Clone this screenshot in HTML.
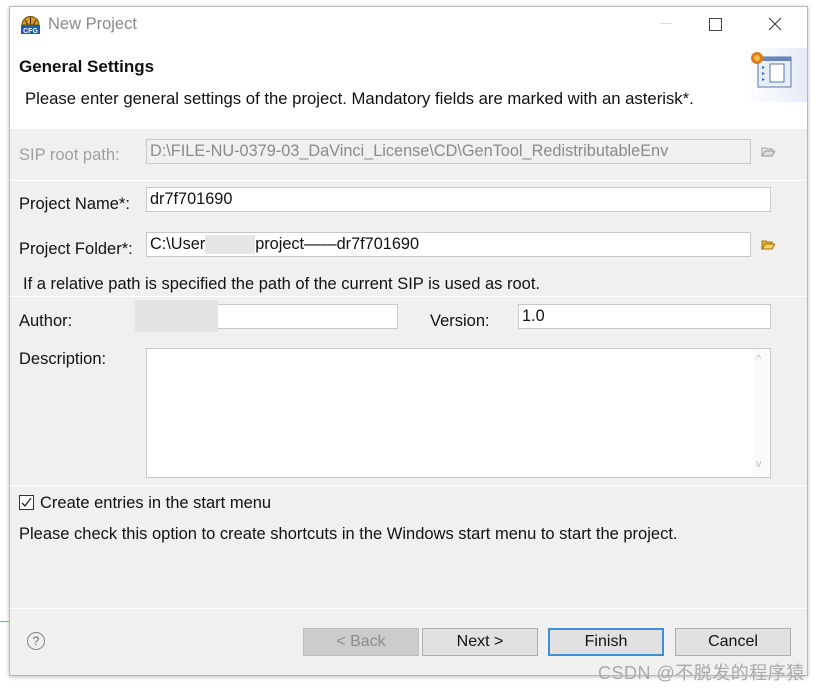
<!DOCTYPE html>
<html><head><meta charset="utf-8"><style>
*{margin:0;padding:0;box-sizing:border-box}
body{width:824px;height:690px;background:#fff;position:relative;overflow:hidden;font-family:"Liberation Sans","Noto Sans CJK SC",sans-serif;font-size:16.5px;color:#111}
.a{position:absolute;white-space:nowrap}
.win{position:absolute;left:9px;top:6px;width:799px;height:670px;border:1px solid #b9b9b9;background:#f0f0f0;box-shadow:0 1px 4px rgba(0,0,0,.25)}
.field{position:absolute;background:#fff;border:1px solid #c8c8c8;height:25px;padding:2px 3px;font-size:16.3px;line-height:19px;white-space:nowrap;overflow:hidden}
.sep{position:absolute;left:10px;width:796px;height:1px;background:#cfcfcf;border-bottom:1px solid #fff}
.btn{position:absolute;top:628px;width:116px;height:28px;border:1px solid #adadad;background:#e1e1e1;text-align:center;line-height:26px;font-size:16px}
</style></head><body>
<div class="win"></div>
<div class="a" style="left:10px;top:7px;width:797px;height:121px;background:#fff"></div>
<svg class="a" style="left:20px;top:14px" width="21" height="21" viewBox="0 0 21 21"><path d="M2 11A8.5 8.5 0 0 1 19 11Z" fill="#d8a020" stroke="#6b4a10"/><path d="M10.5 3v8M5 6l3 5M16 6l-3 5" stroke="#4a3010"/><rect x="1" y="11" width="19" height="9" fill="#1e5bb5"/><text x="10.5" y="19" font-size="7" fill="#fff" text-anchor="middle" font-family="Liberation Sans" font-weight="bold">CFG</text></svg>
<div class="a" style="left:48px;top:15px;font-size:16.5px;color:#8a8a8a">New Project</div>
<div class="a" style="left:660px;top:23px;width:12px;height:1px;background:#ddd"></div>
<div class="a" style="left:709px;top:18px;width:13px;height:13px;border:1px solid #444"></div>
<svg class="a" style="left:768px;top:17px" width="14" height="14"><path d="M1 1L13 13M13 1L1 13" stroke="#444" stroke-width="1.2"/></svg>
<div class="a" style="left:19px;top:57px;font-size:17px;font-weight:bold">General Settings</div>
<div class="a" style="left:25px;top:89px;font-size:16.7px">Please enter general settings of the project. Mandatory fields are marked with an asterisk*.</div>
<div class="a" style="left:745px;top:48px;width:62px;height:54px;background:linear-gradient(90deg,#fff,#e6ebf7)"></div>
<svg class="a" style="left:746px;top:48px" width="50" height="48" viewBox="0 0 50 48"><rect x="12" y="9" width="33" height="30" fill="#e8eef8" stroke="#5a76a8"/><rect x="12" y="9" width="33" height="4" fill="#6a86b8"/><rect x="24" y="16" width="14" height="18" fill="#fff" stroke="#5a76a8"/><path d="M16 18l3 1.5-3 1.5zM16 24l3 1.5-3 1.5zM16 30l3 1.5-3 1.5z" fill="#2a6ad0"/><circle cx="11" cy="10" r="6" fill="#e07a18"/><circle cx="11" cy="10" r="3" fill="#f6c14a"/></svg>
<div class="sep" style="top:128px"></div>
<div class="a" style="left:19px;top:146px;color:#a0a0a0">SIP root path:</div>
<div class="field" style="left:146px;top:139px;width:605px;background:#f0f0f0;color:#8a8a8a">D:\FILE-NU-0379-03_DaVinci_License\CD\GenTool_RedistributableEnv</div>
<svg class="a" style="left:761px;top:146px" width="14" height="11"><path d="M1 2h4l1 1h5v7H1z" fill="none" stroke="#999"/><path d="M1 10l3-5h10l-3 5z" fill="#ddd" stroke="#999"/></svg>
<div class="sep" style="top:180px"></div>
<div class="a" style="left:19px;top:195px">Project Name*:</div>
<div class="field" style="left:146px;top:187px;width:625px">dr7f701690</div>
<div class="a" style="left:19px;top:240px">Project Folder*:</div>
<div class="field" style="left:146px;top:232px;width:605px">C:\User<span style="display:inline-block;width:50px;height:19px;background:#e6e6e6;vertical-align:top"></span>project——dr7f701690</div>
<svg class="a" style="left:761px;top:239px" width="14" height="11"><path d="M1 2h4l1 1h5v7H1z" fill="#e8b030" stroke="#a07010"/><path d="M1 10l3-5h10l-3 5z" fill="#f6d060" stroke="#a07010"/></svg>
<div class="a" style="left:23px;top:275px">If a relative path is specified the path of the current SIP is used as root.</div>
<div class="sep" style="top:296px"></div>
<div class="a" style="left:19px;top:312px">Author:</div>
<div class="field" style="left:146px;top:304px;width:252px"></div>
<div class="a" style="left:135px;top:300px;width:83px;height:32px;background:#e3e3e3"></div>
<div class="a" style="left:430px;top:312px">Version:</div>
<div class="field" style="left:518px;top:304px;width:253px">1.0</div>
<div class="a" style="left:19px;top:350px">Description:</div>
<div class="field" style="left:146px;top:348px;width:625px;height:130px"></div>
<div class="a" style="left:753px;top:349px;width:17px;height:128px;background:#fafafa"></div>
<div class="a" style="left:756px;top:353px;font-size:11px;color:#bbb">^</div>
<div class="a" style="left:756px;top:458px;font-size:11px;color:#bbb">v</div>
<div class="sep" style="top:485px"></div>
<div class="a" style="left:19px;top:495px;width:15px;height:15px;border:1px solid #333;background:#fff"></div>
<svg class="a" style="left:20px;top:496px" width="13" height="13"><path d="M2 7l3 3 6-8" fill="none" stroke="#222" stroke-width="1.3"/></svg>
<div class="a" style="left:40px;top:494px">Create entries in the start menu</div>
<div class="a" style="left:19px;top:525px">Please check this option to create shortcuts in the Windows start menu to start the project.</div>
<div class="sep" style="top:608px"></div>
<div class="a" style="left:0;top:621px;width:9px;height:1px;background:#7aa0d0"></div>
<div class="a" style="left:27px;top:632px;width:18px;height:18px;border:1px solid #888;border-radius:50%;text-align:center;font-size:12px;line-height:16px;color:#666">?</div>
<div class="btn" style="left:303px;background:#cccccc;border-color:#bfbfbf;color:#8d8d8d">&lt; Back</div>
<div class="btn" style="left:422px">Next &gt;</div>
<div class="btn" style="left:548px;border:2px solid #3c8fdc;line-height:24px">Finish</div>
<div class="btn" style="left:675px">Cancel</div>
<div class="a" style="left:598px;top:659px;font-size:18px;letter-spacing:0.5px;color:#aaa">CSDN @不脱发的程序猿</div>
</body></html>
